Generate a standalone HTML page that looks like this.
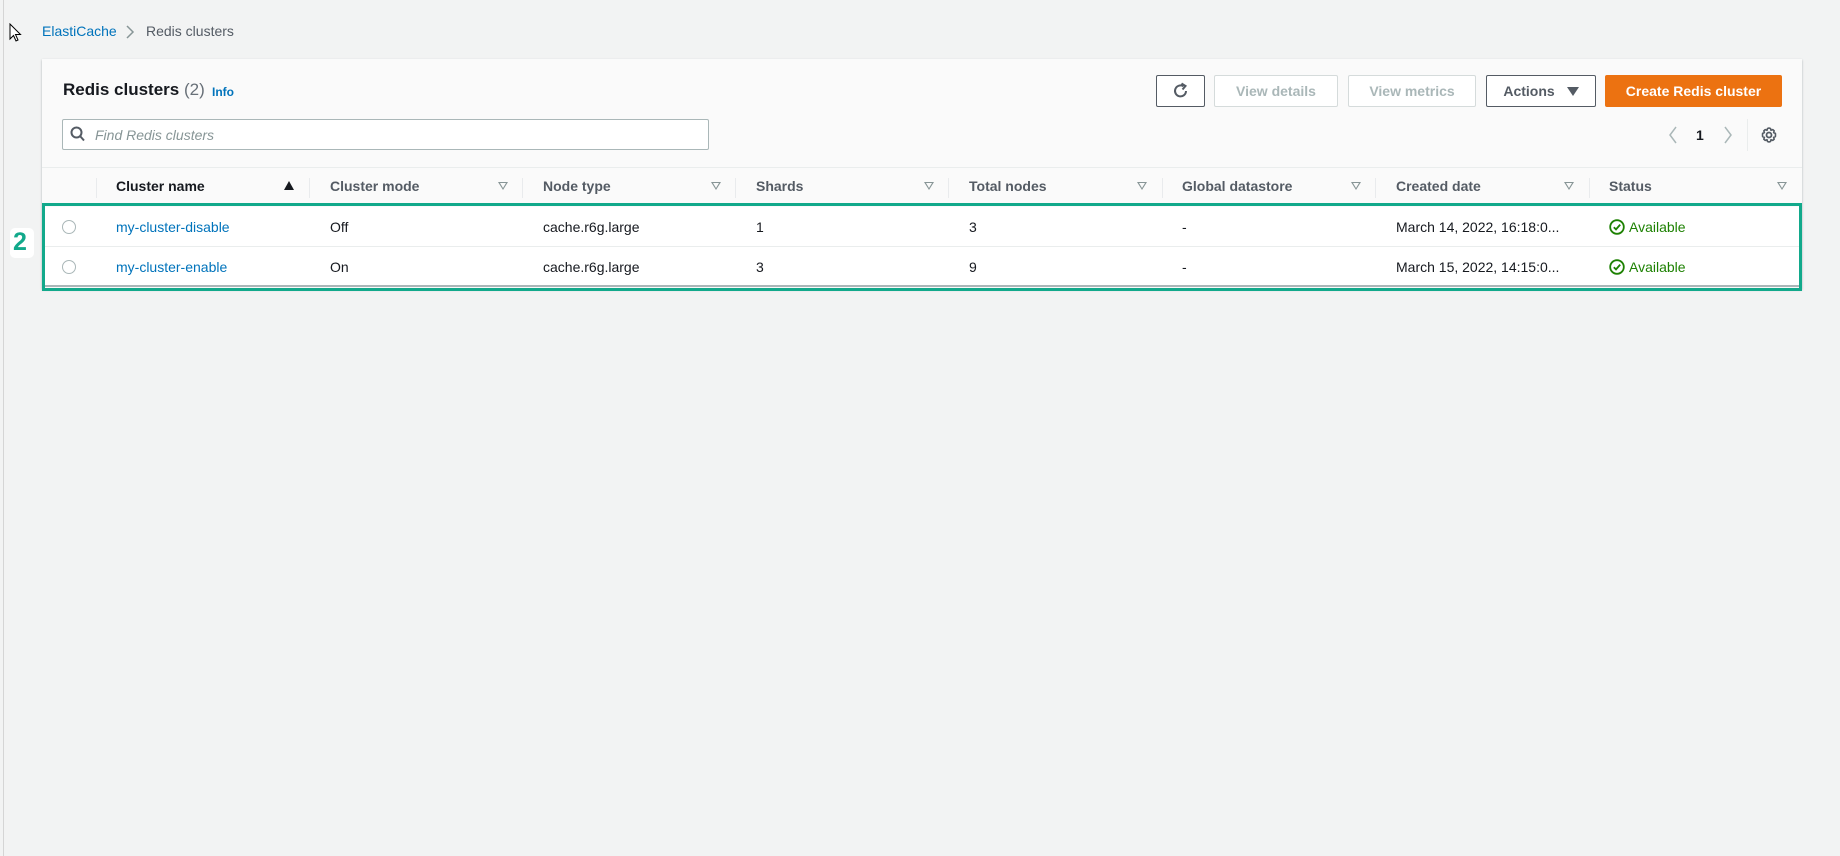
<!DOCTYPE html>
<html><head><meta charset="utf-8">
<style>
*{margin:0;padding:0;box-sizing:border-box}
body{width:1840px;height:856px;background:#f2f3f3;font-family:"Liberation Sans",sans-serif;font-size:14px;color:#16191f;position:relative;overflow:hidden}
.a{position:absolute;white-space:nowrap}
.lnk{color:#0073bb}
.panel{position:absolute;left:42px;top:59px;width:1760px;height:230px;background:#fafafa;box-shadow:0 1px 2px rgba(0,28,36,.3)}
.btn{position:absolute;top:75px;height:32px;border:1px solid #d5dbdb;border-radius:2px;background:#fff;color:#aab7b8;font-weight:bold;font-size:14px;display:flex;align-items:center;justify-content:center}
.th{position:absolute;top:178px;font-weight:bold;color:#545b64;font-size:14px}
.sep{position:absolute;top:178px;width:1px;height:20px;background:#e9ebed}
.tri{position:absolute;top:182px;width:0;height:0;border-left:5px solid transparent;border-right:5px solid transparent;border-top:8px solid #879596}
.tri::after{content:"";position:absolute;left:-3px;top:-7px;border-left:3px solid transparent;border-right:3px solid transparent;border-top:5px solid #fafafa}
.row{position:absolute;left:42px;width:1760px;height:40px;background:#fff;border-bottom:1px solid #eaeded}
.radio{position:absolute;left:62px;width:14px;height:14px;border:1px solid #aab7b8;border-radius:50%;background:#fff}
.td{position:absolute;font-size:14px}
.ok{position:absolute;color:#1d8102;font-size:14px}
</style></head><body>
<div class="a" style="left:3px;top:0;width:1px;height:856px;background:#d5d5d5"></div>
<svg class="a" style="left:9px;top:23px" width="13" height="20" viewBox="0 0 13 20"><path d="M1 1 L1 16 L4.5 12.5 L7 18 L9 17 L6.5 11.5 L11.5 11.5 Z" fill="#fff" stroke="#000" stroke-width="1"/></svg>
<div class="a lnk" style="left:42px;top:23px">ElastiCache</div>
<svg class="a" style="left:125px;top:24px" width="10" height="16" viewBox="0 0 10 16"><path d="M2 2 L8 8 L2 14" fill="none" stroke="#879596" stroke-width="1.5"/></svg>
<div class="a" style="left:146px;top:23px;color:#545b64">Redis clusters</div>

<div class="panel"></div>
<div class="a" style="left:63px;top:80px;font-size:17px;font-weight:bold">Redis clusters <span style="font-weight:normal;color:#687078">(2)</span></div>
<div class="a lnk" style="left:212px;top:85px;font-size:12px;font-weight:bold">Info</div>
<div class="a" style="left:62px;top:119px;width:647px;height:31px;border:1px solid #aab7b8;border-radius:2px;background:#fff"></div>
<svg class="a" style="left:70px;top:126px" width="16" height="17" viewBox="0 0 16 17"><circle cx="6.5" cy="6.5" r="5" fill="none" stroke="#545b64" stroke-width="2"/><path d="M10 10 L14 14.5" stroke="#545b64" stroke-width="2"/></svg>
<div class="a" style="left:95px;top:127px;color:#879596;font-style:italic">Find Redis clusters</div>

<div class="btn" style="left:1156px;width:49px;border-color:#545b64"><svg width="18" height="18" viewBox="0 0 18 18"><path d="M14 9 A5.5 5.5 0 1 1 11.5 4.3" fill="none" stroke="#545b64" stroke-width="2"/><path d="M9.5 1.5 L13.5 4 L10.5 7.5" fill="none" stroke="#545b64" stroke-width="2"/></svg></div>
<div class="btn" style="left:1214px;width:124px">View details</div>
<div class="btn" style="left:1348px;width:128px">View metrics</div>
<div class="btn" style="left:1486px;width:110px;border-color:#545b64;color:#545b64">Actions <span style="display:inline-block;margin-left:12px;border-left:6px solid transparent;border-right:6px solid transparent;border-top:9px solid #545b64"></span></div>
<div class="btn" style="left:1605px;width:177px;background:#ec7211;border-color:#ec7211;color:#fff">Create Redis cluster</div>

<svg class="a" style="left:1667px;top:125px" width="12" height="20" viewBox="0 0 12 20"><path d="M9 2 L3 10 L9 18" fill="none" stroke="#aab7b8" stroke-width="1.5"/></svg>
<div class="a" style="left:1696px;top:127px;font-weight:bold">1</div>
<svg class="a" style="left:1722px;top:125px" width="12" height="20" viewBox="0 0 12 20"><path d="M3 2 L9 10 L3 18" fill="none" stroke="#aab7b8" stroke-width="1.5"/></svg>
<div class="a" style="left:1747px;top:119px;width:1px;height:32px;background:#eaeded"></div>
<svg class="a" style="left:1760px;top:126px" width="18" height="18" viewBox="0 0 18 18"><circle cx="9" cy="9" r="2.5" fill="none" stroke="#545b64" stroke-width="1.8"/><path d="M9 2 L10.5 2.5 L11 4.3 L12.8 3.6 L14.2 4.8 L13.6 6.6 L15.4 7.4 L15.5 9 L15.4 10.6 L13.6 11.4 L14.2 13.2 L12.8 14.4 L11 13.7 L10.5 15.5 L9 16 L7.5 15.5 L7 13.7 L5.2 14.4 L3.8 13.2 L4.4 11.4 L2.6 10.6 L2.5 9 L2.6 7.4 L4.4 6.6 L3.8 4.8 L5.2 3.6 L7 4.3 L7.5 2.5 Z" fill="none" stroke="#545b64" stroke-width="1.6" stroke-linejoin="round"/></svg>

<div class="a" style="left:42px;top:167px;width:1760px;height:1px;background:#eaeded"></div>
<div class="sep" style="left:96px"></div>
<div class="th" style="left:116px;color:#16191f">Cluster name</div>
<div class="a" style="left:284px;top:181px;border-left:5px solid transparent;border-right:5px solid transparent;border-bottom:9px solid #16191f"></div>
<div class="sep" style="left:309px"></div><div class="th" style="left:330px">Cluster mode</div><div class="tri" style="left:498px"></div>
<div class="sep" style="left:522px"></div><div class="th" style="left:543px">Node type</div><div class="tri" style="left:711px"></div>
<div class="sep" style="left:735px"></div><div class="th" style="left:756px">Shards</div><div class="tri" style="left:924px"></div>
<div class="sep" style="left:948px"></div><div class="th" style="left:969px">Total nodes</div><div class="tri" style="left:1137px"></div>
<div class="sep" style="left:1162px"></div><div class="th" style="left:1182px">Global datastore</div><div class="tri" style="left:1351px"></div>
<div class="sep" style="left:1375px"></div><div class="th" style="left:1396px">Created date</div><div class="tri" style="left:1564px"></div>
<div class="sep" style="left:1589px"></div><div class="th" style="left:1609px">Status</div><div class="tri" style="left:1777px"></div>

<div class="row" style="top:207px"></div>
<div class="row" style="top:247px;border-bottom:2px solid #aab7b8"></div>
<div class="radio" style="top:220px"></div>
<div class="radio" style="top:260px"></div>
<div class="td lnk" style="left:116px;top:219px">my-cluster-disable</div>
<div class="td lnk" style="left:116px;top:259px">my-cluster-enable</div>
<div class="td" style="left:330px;top:219px">Off</div><div class="td" style="left:330px;top:259px">On</div>
<div class="td" style="left:543px;top:219px">cache.r6g.large</div><div class="td" style="left:543px;top:259px">cache.r6g.large</div>
<div class="td" style="left:756px;top:219px">1</div><div class="td" style="left:756px;top:259px">3</div>
<div class="td" style="left:969px;top:219px">3</div><div class="td" style="left:969px;top:259px">9</div>
<div class="td" style="left:1182px;top:219px">-</div><div class="td" style="left:1182px;top:259px">-</div>
<div class="td" style="left:1396px;top:219px">March 14, 2022, 16:18:0...</div><div class="td" style="left:1396px;top:259px">March 15, 2022, 14:15:0...</div>
<svg class="a" style="left:1609px;top:219px" width="16" height="16" viewBox="0 0 16 16"><circle cx="8" cy="8" r="6.8" fill="none" stroke="#1d8102" stroke-width="1.8"/><path d="M4.8 8.2 L7 10.4 L11.2 5.6" fill="none" stroke="#1d8102" stroke-width="1.8"/></svg>
<div class="ok" style="left:1629px;top:219px">Available</div>
<svg class="a" style="left:1609px;top:259px" width="16" height="16" viewBox="0 0 16 16"><circle cx="8" cy="8" r="6.8" fill="none" stroke="#1d8102" stroke-width="1.8"/><path d="M4.8 8.2 L7 10.4 L11.2 5.6" fill="none" stroke="#1d8102" stroke-width="1.8"/></svg>
<div class="ok" style="left:1629px;top:259px">Available</div>

<div class="a" style="left:42px;top:203px;width:1760px;height:88px;border:3px solid #12a98b"></div>
<div class="a" style="left:10px;top:228px;width:24px;height:30px;background:#fff;border-radius:5px"></div>
<div class="a" style="left:13px;top:228px;font-size:25px;font-weight:bold;color:#12a98b">2</div>
</body></html>
